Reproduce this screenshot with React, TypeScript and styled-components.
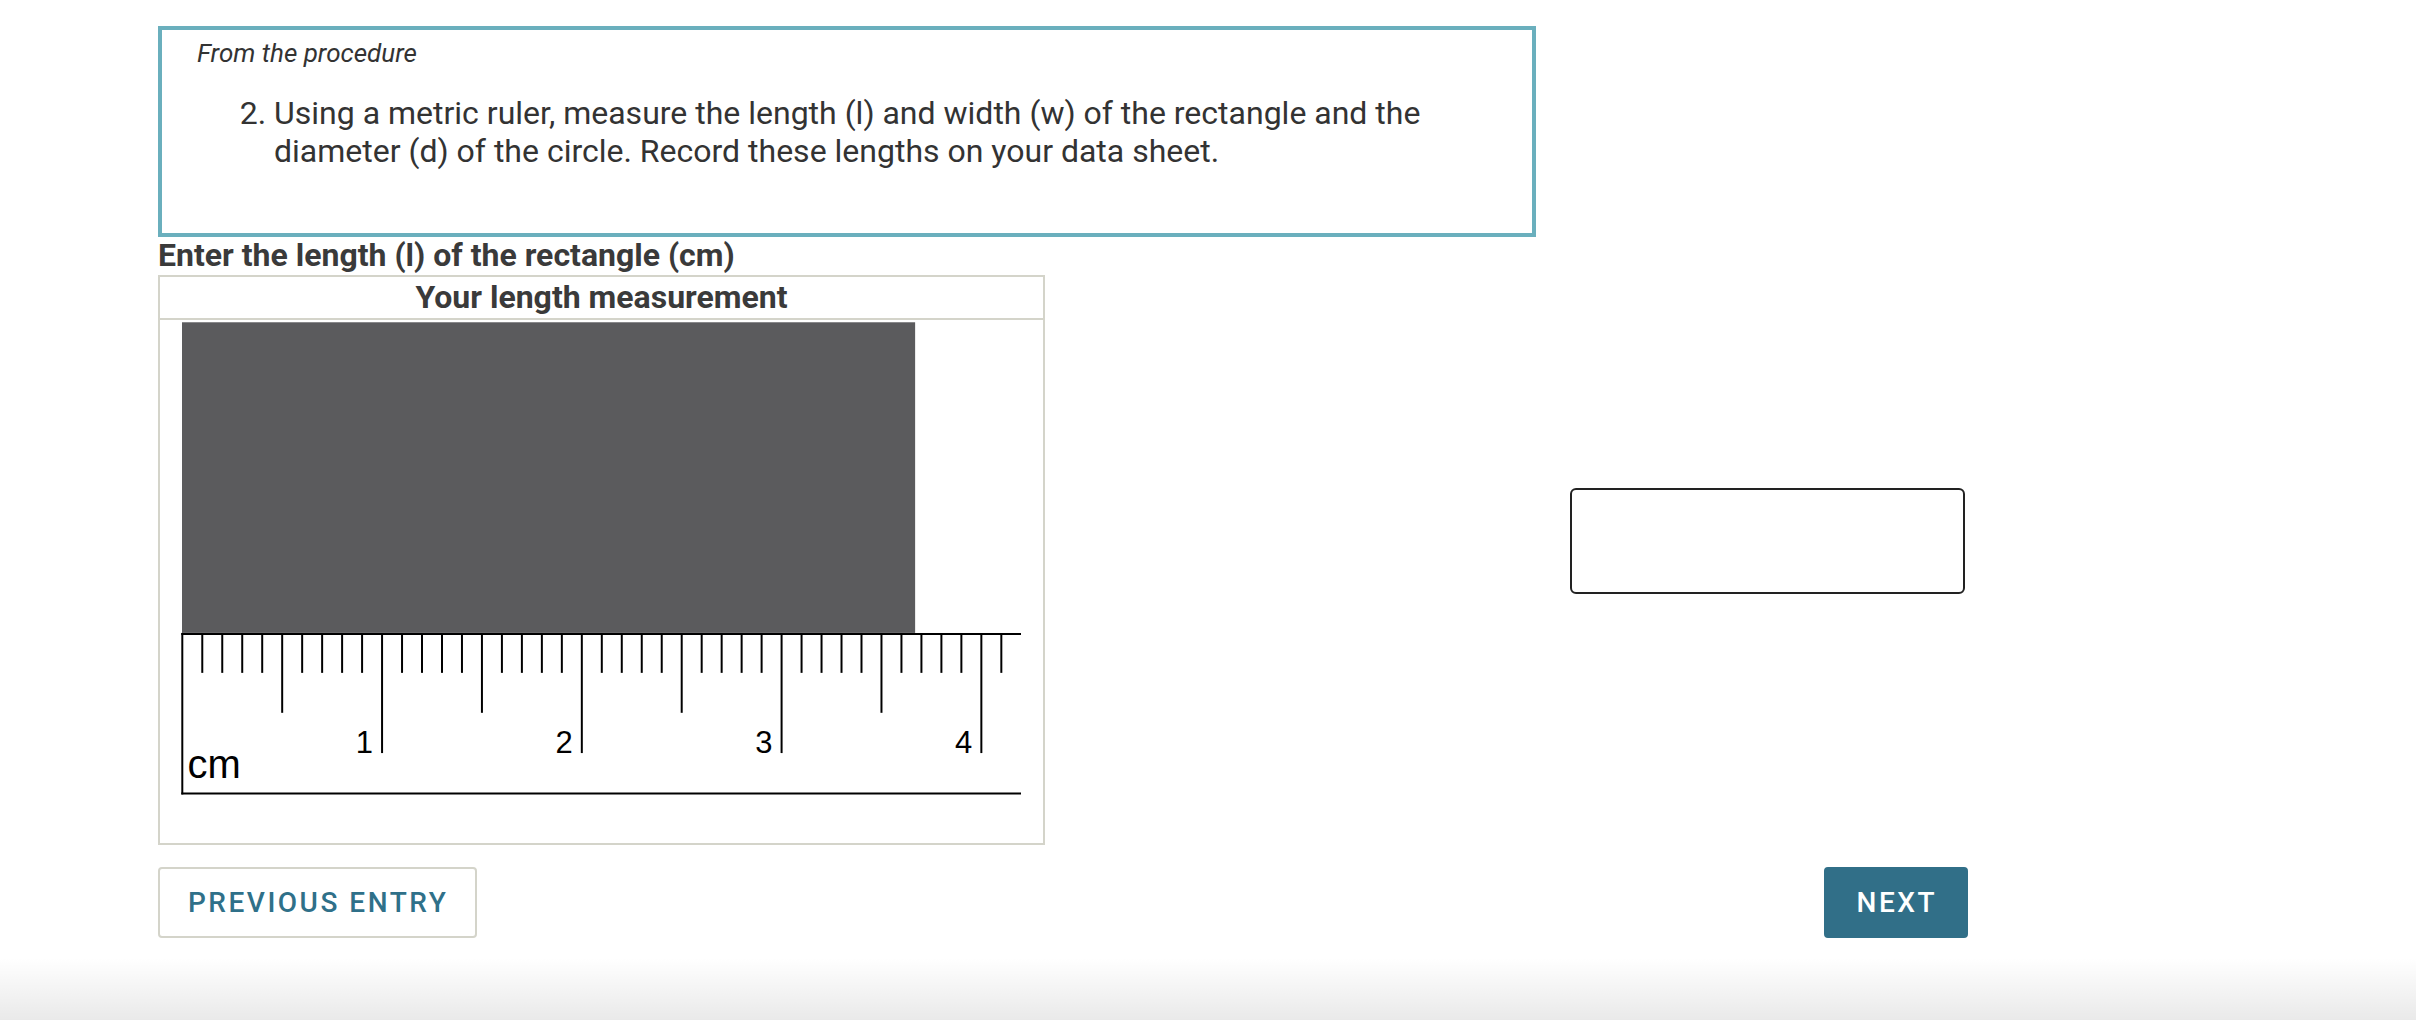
import styled, { createGlobalStyle } from "styled-components";

const GlobalStyle = createGlobalStyle`
  html, body {
    margin: 0;
    padding: 0;
    background: #ffffff;
  }
  body {
    font-family: Roboto, "Noto Sans", "Liberation Sans", sans-serif;
    color: #333333;
  }
`;

const Page = styled.div`
  min-height: 100vh;
  display: flex;
  flex-direction: column;
`;

const Content = styled.div`
  width: 1810px;
  padding: 26px 0 0 158px;
`;

const ProcedureBox = styled.section`
  width: 1378px;
  box-sizing: border-box;
  border: 4px solid #6aafbd;
  padding: 8px 34px 62px 35px;
`;

const ProcedureTitle = styled.p`
  margin: 0;
  font-size: 26px;
  line-height: 30px;
  font-style: italic;
  font-weight: 400;
  color: #333333;
`;

const StepList = styled.ol`
  margin: 26px 0 0;
  padding-left: 77px;
  font-size: 32px;
  line-height: 38.4px;
  color: #333333;
`;

const MeasureRow = styled.div`
  display: grid;
  grid-template-columns: 1378px 395px;
  column-gap: 34px;
  align-items: center;
`;

const MeasureColumn = styled.div`
  display: flex;
  flex-direction: column;
`;

const FieldLabel = styled.label`
  margin: 0 0 1px;
  font-size: 32px;
  font-weight: 700;
  line-height: 37px;
  color: #3a3a3a;
`;

const FigureCard = styled.div`
  width: 887px;
  box-sizing: border-box;
  border: 2px solid #d4d4ca;
`;

const FigureHeader = styled.div`
  height: 41px;
  border-bottom: 2px solid #d4d4ca;
  text-align: center;
  font-size: 32px;
  font-weight: 700;
  line-height: 41px;
  color: #3a3a3a;
`;

const FigureBody = styled.div`
  padding: 2px 21px 47px 21px;
  display: flex;
`;

const AnswerInput = styled.input`
  width: 395px;
  height: 106px;
  box-sizing: border-box;
  border: 2px solid #222222;
  border-radius: 6px;
  padding: 0 16px;
  font-family: Roboto, sans-serif;
  font-size: 30px;
  color: #333333;
  outline: none;
`;

const ButtonRow = styled.div`
  margin-top: 22px;
  display: flex;
  justify-content: space-between;
  align-items: center;
`;

const NavButton = styled.button<{ $primary?: boolean }>`
  height: 71px;
  box-sizing: border-box;
  padding: ${(p) => (p.$primary ? "0 29px 0 31px" : "0 27px 0 28px")};
  border-radius: 4px;
  border: 2px solid ${(p) => (p.$primary ? "#316f88" : "#d4d4ca")};
  background: ${(p) => (p.$primary ? "#316f88" : "#ffffff")};
  color: ${(p) => (p.$primary ? "#ffffff" : "#2f7089")};
  font-family: Roboto, sans-serif;
  font-size: 28px;
  font-weight: 500;
  letter-spacing: 2.5px;
  text-transform: uppercase;
  cursor: pointer;
`;

const ShadowBand = styled.div`
  margin-top: auto;
  height: 62px;
  background: linear-gradient(to bottom, rgba(0, 0, 0, 0), rgba(0, 0, 0, 0.085));
`;

const MM = 20;
const RULER_FONT = '"Liberation Sans", Arial, sans-serif';

const Ruler = () => {
  const ticks = [];
  for (let k = 1; k <= 41; k++) {
    const x = 1.3 + k * MM;
    const end = k % 10 === 0 ? 431.3 : k % 5 === 0 ? 391 : 351;
    ticks.push(<line key={k} x1={x} y1={312} x2={x} y2={end} stroke="#000" strokeWidth={2} />);
  }
  const labels = [1, 2, 3, 4].map((c) => (
    <text key={c} x={1.3 + c * 10 * MM - 9} y={431.3} textAnchor="end" fontFamily={RULER_FONT} fontSize={31} fill="#000">
      {c}
    </text>
  ));
  return (
    <svg width={842} height={474} viewBox="0 0 842 474">
      <rect x={1} y={0} width={734} height={311} fill="#5b5b5d" />
      <line x1={0.3} y1={312} x2={841} y2={312} stroke="#000" strokeWidth={2} />
      <line x1={0.3} y1={471.7} x2={841} y2={471.7} stroke="#000" strokeWidth={2} />
      <line x1={1.3} y1={311} x2={1.3} y2={472.7} stroke="#000" strokeWidth={2} />
      {ticks}
      {labels}
      <text x={6.5} y={456.3} fontFamily={RULER_FONT} fontSize={40} fill="#000">
        cm
      </text>
    </svg>
  );
};

const App = () => {
  return (
    <Page>
      <GlobalStyle />
      <Content>
        <ProcedureBox>
          <ProcedureTitle>From the procedure</ProcedureTitle>
          <StepList start={2}>
            <li>
              Using a metric ruler, measure the length (l) and width (w) of the rectangle and the
              diameter (d) of the circle. Record these lengths on your data sheet.
            </li>
          </StepList>
        </ProcedureBox>
        <MeasureRow>
          <MeasureColumn>
            <FieldLabel htmlFor="length-input">Enter the length (l) of the rectangle (cm)</FieldLabel>
            <FigureCard>
              <FigureHeader>Your length measurement</FigureHeader>
              <FigureBody>
                <Ruler />
              </FigureBody>
            </FigureCard>
          </MeasureColumn>
          <AnswerInput id="length-input" type="text" />
        </MeasureRow>
        <ButtonRow>
          <NavButton>Previous Entry</NavButton>
          <NavButton $primary>Next</NavButton>
        </ButtonRow>
      </Content>
      <ShadowBand />
    </Page>
  );
};

export default App;
